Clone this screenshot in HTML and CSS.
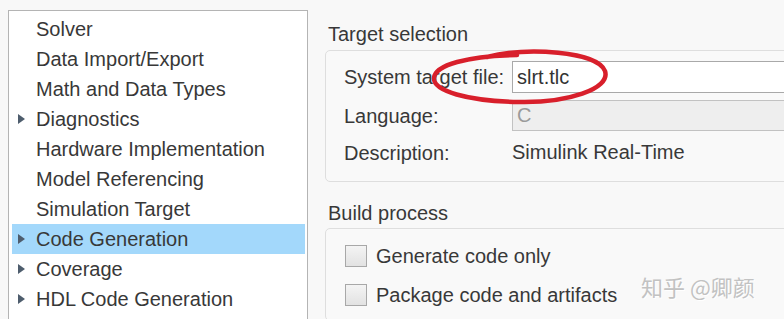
FILE: index.html
```html
<!DOCTYPE html>
<html>
<head>
<meta charset="utf-8">
<link rel="stylesheet" href="styles.css">
</head>
<body>
<div class="page">
  <div class="tree">
    <div class="row">Solver</div>
    <div class="row">Data Import/Export</div>
    <div class="row">Math and Data Types</div>
    <div class="row"><span class="arrow"></span>Diagnostics</div>
    <div class="row">Hardware Implementation</div>
    <div class="row">Model Referencing</div>
    <div class="row">Simulation Target</div>
    <div class="row selected"><span class="arrow"></span>Code Generation</div>
    <div class="row"><span class="arrow"></span>Coverage</div>
    <div class="row"><span class="arrow"></span>HDL Code Generation</div>
  </div>
  <div class="main">
    <div class="heading">Target selection</div>
    <div class="group target">
      <div class="label">System target file:</div>
      <div class="field input">slrt.tlc</div>
      <div class="label">Language:</div>
      <div class="field disabled">C</div>
      <div class="label">Description:</div>
      <div class="value">Simulink Real-Time</div>
    </div>
    <div class="heading build-heading">Build process</div>
    <div class="group build">
      <label class="check"><span class="box"></span>Generate code only</label>
      <label class="check"><span class="box"></span>Package code and artifacts</label>
    </div>
  </div>
  <svg class="circle" width="190" height="66" viewBox="0 0 190 66">
    <path d="M 60 12 C 100 2, 170 6, 178 26 C 184 44, 140 58, 92 57 C 40 56, 6 46, 7 33 C 8 20, 40 11, 90 10" fill="none" stroke="#d81f2b" stroke-width="4.5" stroke-linecap="round"/>
  </svg>
  <div class="watermark">知乎 @卿颜</div>
</div>
</body>
</html>
```

FILE: styles.css
```css
html, body {
  margin: 0;
  padding: 0;
  background: #f8f8f8;
  overflow: hidden;
  width: 784px;
  height: 319px;
}
.page {
  position: relative;
  display: flex;
  align-items: flex-start;
  font-family: "Liberation Sans", Arial, sans-serif;
  font-size: 20px;
  color: #383838;
  width: 784px;
  height: 319px;
  overflow: hidden;
}
.tree {
  margin: 10px 0 0 8px;
  width: 298px;
  height: 320px;
  background: #ffffff;
  border: 1px solid #b4b4b4;
  padding-top: 3px;
  box-sizing: content-box;
  flex: none;
}
.row {
  position: relative;
  height: 30px;
  line-height: 30px;
  margin: 0 2px 0 3px;
  padding-left: 24px;
  white-space: nowrap;
}
.row.selected {
  background: #a3d8fb;
}
.arrow {
  position: absolute;
  left: 6px;
  top: 10px;
  width: 0;
  height: 0;
  border-top: 5px solid transparent;
  border-bottom: 5px solid transparent;
  border-left: 7px solid #4e5d6d;
}
.main {
  margin-left: 17px;
  padding-top: 22px;
  width: 470px;
  flex: none;
}
.heading {
  line-height: 24px;
  height: 24px;
  padding-left: 3px;
  margin-bottom: 4px;
}
.build-heading {
  margin-top: 19px;
  margin-bottom: 3px;
}
.group {
  border: 1px solid #dedede;
  border-radius: 5px;
  background: #f9f9f9;
}
.target {
  display: grid;
  grid-template-columns: 168px 1fr;
  align-items: center;
  row-gap: 7px;
  padding: 10px 0 13px 18px;
}
.label {
  height: 30px;
  line-height: 30px;
}
.field {
  box-sizing: border-box;
  padding-left: 4px;
  border: 1px solid #a9a9a9;
}
.input {
  height: 32px;
  line-height: 30px;
  background: #ffffff;
  color: #333;
}
.disabled {
  height: 31px;
  line-height: 29px;
  background: #eeeeee;
  border-color: #c2c2c2;
  color: #9a9a9a;
}
.value {
  height: 30px;
  line-height: 28px;
}
.build {
  padding: 16px 0 14px 19px;
  display: flex;
  flex-direction: column;
  gap: 17px;
}
.check {
  display: flex;
  align-items: center;
  gap: 9px;
  height: 22px;
  line-height: 22px;
}
.box {
  width: 22px;
  height: 22px;
  box-sizing: border-box;
  border: 1px solid #a8a8a8;
  background: linear-gradient(#f4f4f4, #e2e2e2);
  flex: none;
}
.circle {
  position: absolute;
  left: 427px;
  top: 45px;
}
.watermark {
  position: absolute;
  left: 641px;
  top: 271px;
  font-family: "Noto Sans CJK SC", sans-serif;
  font-size: 22px;
  line-height: 30px;
  color: #c2c2c2;
  text-shadow: 1px 1px 0 #ffffff;
  white-space: nowrap;
}
```
